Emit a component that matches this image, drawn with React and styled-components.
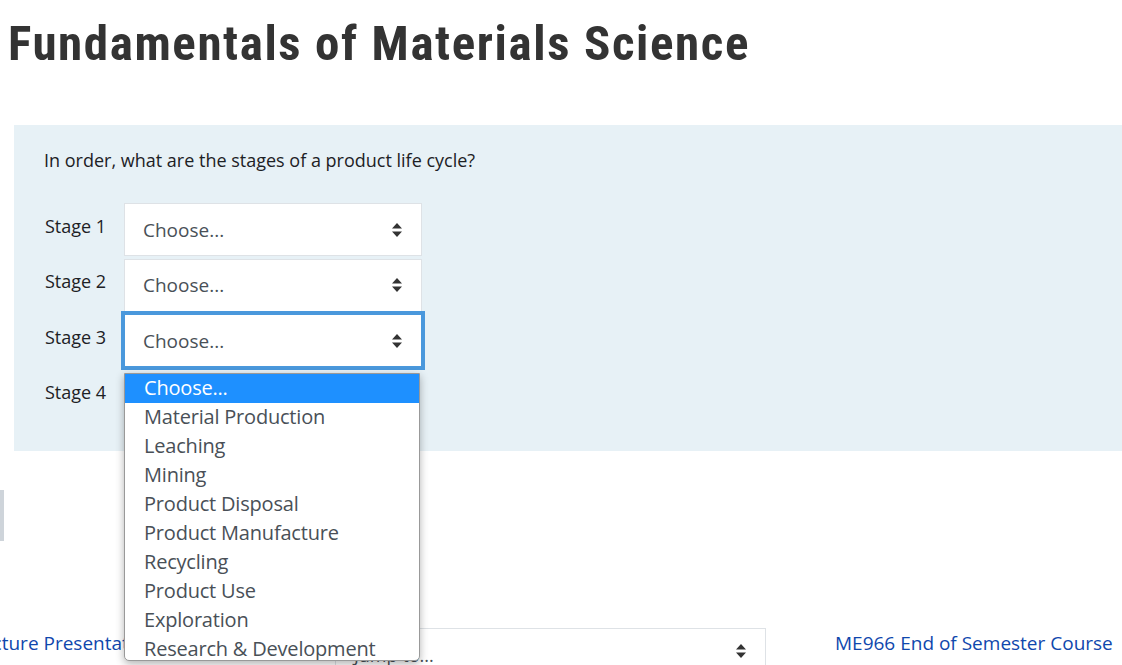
import React from "react";
import styled, { createGlobalStyle } from "styled-components";

const G = createGlobalStyle`
  html,body{margin:0;padding:0;background:#fff;overflow:hidden;}
  body{width:1122px;height:665px;font-family:"Open Sans","Noto Sans",sans-serif;color:#1d2125;}
`;
const Page = styled.div`position:relative;width:1122px;height:665px;overflow:hidden;`;
const Title = styled.h1`
  margin:0;padding:12px 0 0 8px;height:125px;box-sizing:border-box;
  font-family:"Liberation Sans Narrow","Roboto Condensed","Lato",sans-serif;
  font-weight:700;font-size:49px;line-height:64px;color:#333;letter-spacing:1.6px;
`;
const Panel = styled.div`
  margin-left:14px;height:326px;background:#e7f1f6;box-sizing:border-box;
  padding:22px 30px;display:flex;flex-direction:column;
`;
const Q = styled.div`font-size:18px;line-height:26px;margin-bottom:38px;`;
const Rows = styled.div`display:flex;flex-direction:column;gap:18.5px;`;
const Row = styled.div`display:flex;align-items:center;gap:9px;height:37px;`;
const Label = styled.span`font-size:18px;width:70px;padding-left:1px;margin-top:-8px;`;
const Select = styled.div`
  position:relative;width:298px;box-sizing:border-box;
  background:#fff;border:1px solid #dee2e6;display:flex;align-items:center;
  padding:0 18px;font-size:19px;color:#495057;justify-content:space-between;
  height:53px;padding-top:0;
  ${p=>p.$focus&&`outline:4px solid #4a98dc;outline-offset:-1px;`}
`;
const Arrows = () => (
  <svg width="12" height="16" viewBox="0 0 12 16"><path d="M1 6.5L6 1l5 5.5zM1 9.5L6 15l5-5.5z" fill="#333"/></svg>
);
const List = styled.ul`
  position:absolute;left:124px;top:373px;width:296px;height:288px;margin:0;padding:0;list-style:none;
  background:#fff;border:1px solid #999;border-radius:0 0 5px 5px;box-shadow:0 3px 8px rgba(0,0,0,.3);
  overflow:hidden;box-sizing:border-box;
`;
const Item = styled.li`
  height:29px;line-height:28px;padding-left:19px;font-size:20px;color:${p=>p.$sel?"#fff":"#495057"};
  background:${p=>p.$sel?"#1e90ff":"transparent"};letter-spacing:-0.2px;
`;
const Side = styled.div`position:absolute;left:0;top:490px;width:4px;height:51px;background:#ced4da;`;
const Bottom = styled.div`
  position:absolute;left:0;top:628px;width:1122px;display:flex;align-items:flex-start;font-size:19px;color:#0f47ad;
`;
const Prev = styled.span`margin-left:-28px;width:363px;white-space:nowrap;padding-top:2px;`;
const Jump = styled.div`
  width:431px;height:44px;border:1px solid #dee2e6;box-sizing:border-box;display:flex;justify-content:space-between;
  padding:14px 18px 0;color:#495057;font-size:18px;
`;
const Next = styled.span`margin-left:69px;white-space:nowrap;padding-top:2px;`;

const opts=["Choose...","Material Production","Leaching","Mining","Product Disposal","Product Manufacture","Recycling","Product Use","Exploration","Research & Development"];

export default function App(){
  return (<Page><G/>
    <Title>Fundamentals of Materials Science</Title>
    <Panel>
      <Q>In order, what are the stages of a product life cycle?</Q>
      <Rows>
        {[1,2,3,4].map(n=>(
          <Row key={n}><Label>Stage {n}</Label>
            {n<4 && <Select $focus={n===3}>Choose...<Arrows/></Select>}
          </Row>))}
      </Rows>
    </Panel>
    <Side/>
    <Bottom>
      <Prev>Lecture Presentations</Prev>
      <Jump>Jump to...<Arrows/></Jump>
      <Next>ME966 End of Semester Course</Next>
    </Bottom>
    <List>{opts.map((o,i)=><Item key={o} $sel={i===0}>{o}</Item>)}</List>
  </Page>);
}
